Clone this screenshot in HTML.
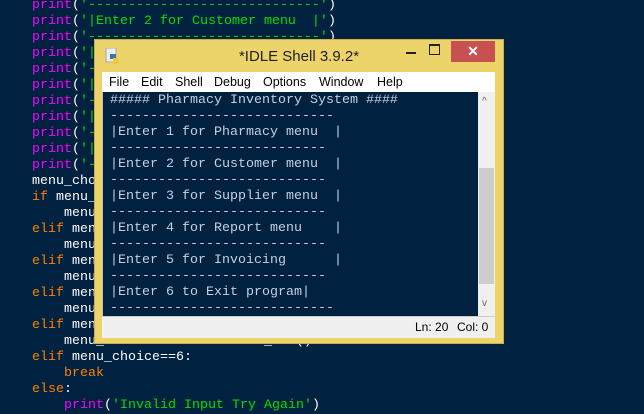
<!DOCTYPE html>
<html><head><meta charset="utf-8"><style>
body{margin:0;width:644px;height:401px;overflow:hidden;background:#002240;position:relative;font-family:"Liberation Mono",monospace}
.code{position:absolute;left:0;top:-2px;font-size:13.33px;line-height:16px;color:#fff;white-space:pre}
.p{color:#ff00ff}.s{color:#00e000}.k{color:#ff8000}
.win{position:absolute;left:95px;top:40px;width:408px;height:303px;background:#ecd36a;box-shadow:0 0 0 1px #c8b050}
.title{position:absolute;left:0;right:0;top:8px;text-align:center;font-family:"Liberation Sans",sans-serif;font-size:15px;color:#222}
.close{position:absolute;left:356px;top:1px;width:44px;height:21px;background:#c75050;color:#fff;text-align:center;font:bold 14px/21px "Liberation Sans",sans-serif}
.menu{position:absolute;left:7px;top:32px;width:393px;height:20px;background:#fff;font-family:"Liberation Sans",sans-serif;font-size:12.5px;line-height:20px;color:#000}
.menu span{position:absolute}
.txt{position:absolute;left:7px;top:52px;width:376px;height:224px;background:#002240;border-left:1px solid #c0c0c0;overflow:hidden}
.shell{position:absolute;left:7px;top:1px;font-size:13.33px;line-height:16px;color:#c6cfe0;white-space:pre}
.sb{position:absolute;left:383px;top:52px;width:17px;height:224px;background:#f0f0f0}
.thumb{position:absolute;left:1px;top:76px;width:15px;height:116px;background:#cdcdcd}
.status{position:absolute;left:7px;top:276px;width:393px;height:21px;background:#f0f0f0;border-top:1px solid #ccc;font-family:"Liberation Sans",sans-serif;font-size:12px;line-height:21px;color:#000}
</style></head><body>
<div class="code"><span class="p">    print</span>(<span class="s">'-----------------------------'</span>)
<span class="p">    print</span>(<span class="s">'|Enter 2 for Customer menu  |'</span>)
<span class="p">    print</span>(<span class="s">'-----------------------------'</span>)
<span class="p">    print</span>(<span class="s">'|</span>
<span class="p">    print</span>(<span class="s">'-</span>
<span class="p">    print</span>(<span class="s">'|</span>
<span class="p">    print</span>(<span class="s">'-</span>
<span class="p">    print</span>(<span class="s">'|</span>
<span class="p">    print</span>(<span class="s">'-</span>
<span class="p">    print</span>(<span class="s">'|</span>
<span class="p">    print</span>(<span class="s">'-</span>
    menu_cho
<span class="k">    if</span> menu_
        menu
<span class="k">    elif</span> men
        menu
<span class="k">    elif</span> men
        menu
<span class="k">    elif</span> men
        menu
<span class="k">    elif</span> men
        menu_                    _   ()
<span class="k">    elif</span> menu_choice==6:
<span class="k">        break</span>
<span class="k">    else</span>:
        <span class="p">print</span>(<span class="s">'Invalid Input Try Again'</span>)</div>
<div class="win">
<svg style="position:absolute;left:10px;top:8px" width="16" height="18"><rect x="1" y="0" width="10" height="14" fill="#eee" stroke="#aaa"/><rect x="5" y="6" width="6" height="5" fill="#3a74b0"/><rect x="8" y="10" width="6" height="6" fill="#f2c83a"/></svg>
<div class="title">*IDLE Shell 3.9.2*</div>
<div style="position:absolute;left:311px;top:12px;width:10px;height:2px;background:#222"></div>
<div style="position:absolute;left:334px;top:4px;width:9px;height:8px;border:1px solid #222;border-top-width:2px"></div>
<div class="close">✕</div>
<div class="menu"><span style="left:7px">File</span><span style="left:39px">Edit</span><span style="left:73px">Shell</span><span style="left:112px">Debug</span><span style="left:161px">Options</span><span style="left:217px">Window</span><span style="left:275px">Help</span></div>
<div class="txt"><div class="shell">##### Pharmacy Inventory System ####
----------------------------
|Enter 1 for Pharmacy menu  |
---------------------------
|Enter 2 for Customer menu  |
---------------------------
|Enter 3 for Supplier menu  |
---------------------------
|Enter 4 for Report menu    |
---------------------------
|Enter 5 for Invoicing      |
---------------------------
|Enter 6 to Exit program|
----------------------------</div></div>
<div class="sb"><div style="position:absolute;left:4px;top:4px;font:10px sans-serif;color:#666">^</div><div class="thumb"></div><div style="position:absolute;left:4px;top:206px;font:10px sans-serif;color:#666">v</div></div>
<div class="status"><span style="position:absolute;left:313px">Ln: 20</span><span style="position:absolute;left:355px">Col: 0</span></div>
</div>
</body></html>
